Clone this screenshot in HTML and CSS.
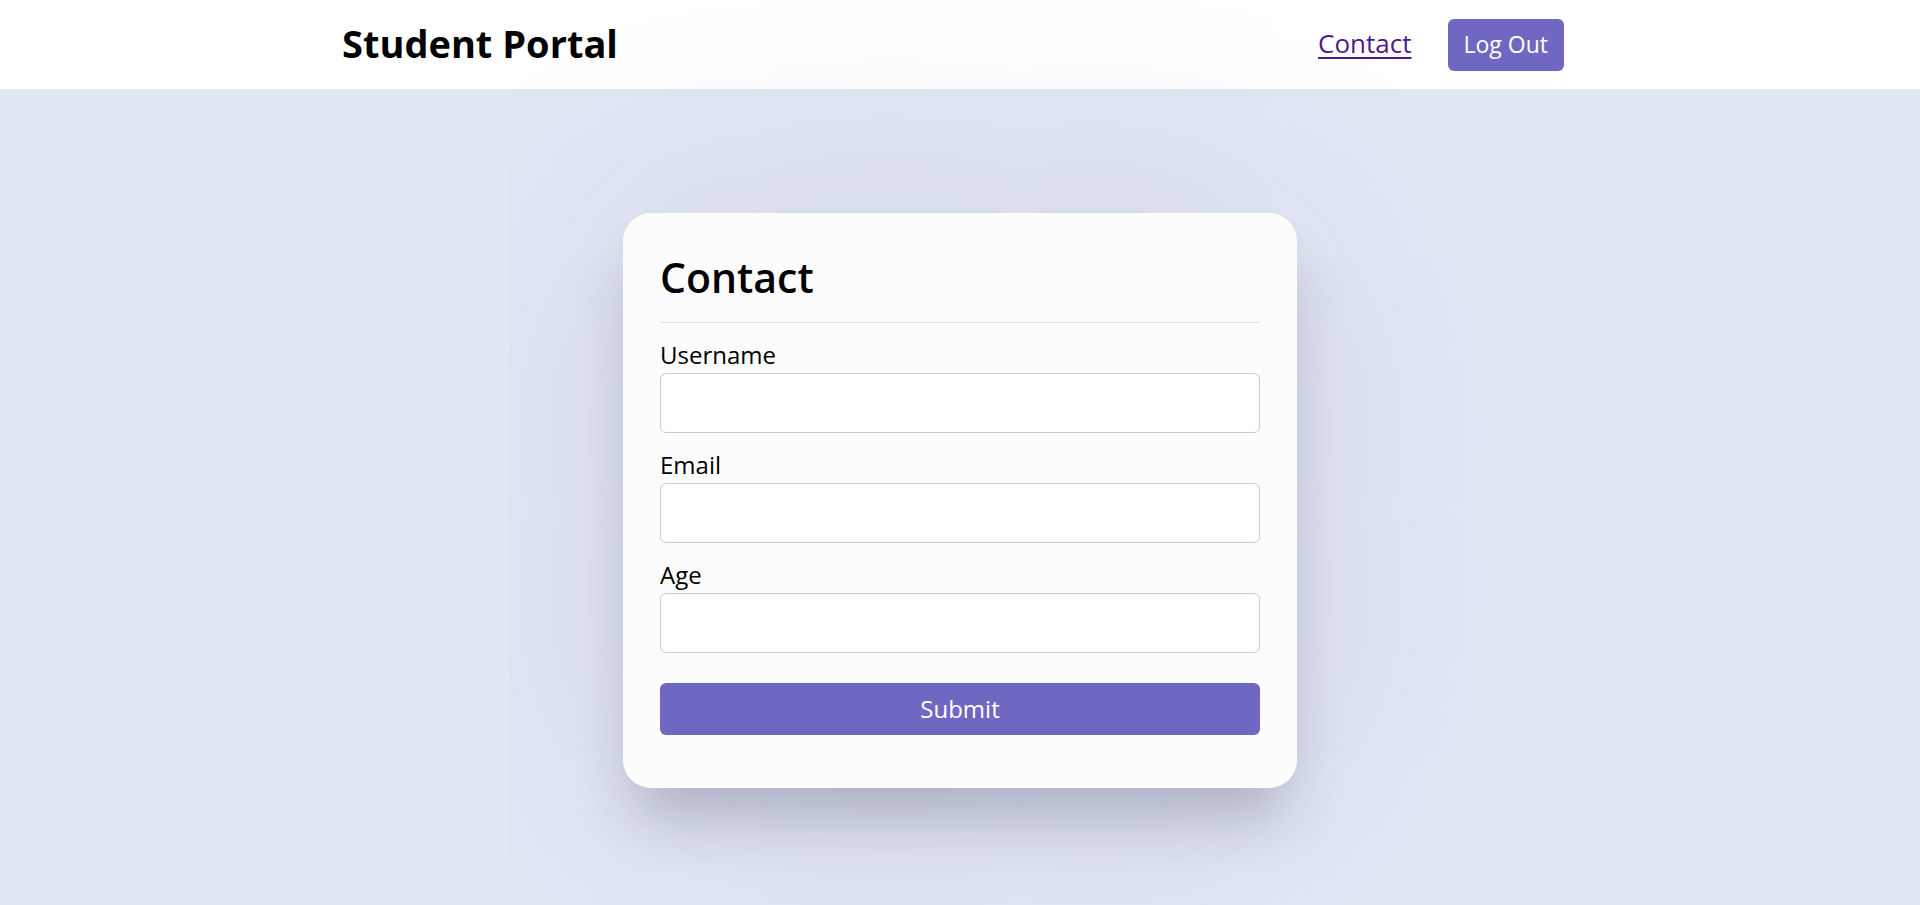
FILE: index.html
```html
<!DOCTYPE html>
<html lang="en">
<head>
<meta charset="utf-8">
<title>Student Portal</title>
<link rel="stylesheet" href="styles.css">
</head>
<body>
<header class="site-header">
  <div class="header-inner">
    <h1 class="brand">Student Portal</h1>
    <nav class="nav">
      <a class="nav-link" href="#">Contact</a>
      <button class="btn-logout" type="button">Log Out</button>
    </nav>
  </div>
</header>
<main class="main">
  <section class="card">
    <h2 class="card-title">Contact</h2>
    <form class="form">
      <label class="field-label" for="username">Username</label>
      <input class="field-input" id="username" type="text">
      <label class="field-label" for="email">Email</label>
      <input class="field-input" id="email" type="email">
      <label class="field-label" for="age">Age</label>
      <input class="field-input" id="age" type="number">
      <button class="btn-submit" type="submit">Submit</button>
    </form>
  </section>
</main>
</body>
</html>
```
FILE: styles.css
```css
* { box-sizing: border-box; }

html, body {
  margin: 0;
  padding: 0;
}

body {
  font-family: "Open Sans", "Liberation Sans", sans-serif;
  background: #e2e7f4;
  color: #000;
  min-height: 905px;
}

.site-header {
  background: #fff;
  height: 89px;
}

.header-inner {
  width: 1240px;
  margin: 0 auto;
  height: 100%;
  padding: 0 16px 0 2px;
  display: flex;
  align-items: center;
  justify-content: space-between;
}

.brand {
  margin: 0 0 4px;
  font-size: 38px;
  font-weight: 700;
  line-height: 1;
  letter-spacing: 0;
}

.nav {
  display: flex;
  align-items: center;
  gap: 36px;
}

.nav-link {
  margin-bottom: 4px;
  color: #4e1a8b;
  font-size: 26px;
  text-decoration: underline;
  text-decoration-thickness: 2px;
  text-underline-offset: 4px;
}

.btn-logout {
  font-family: inherit;
  font-size: 23px;
  color: #fff;
  background: #6f68c3;
  border: none;
  border-radius: 6px;
  height: 52px;
  padding: 0 16px 2px;
  cursor: pointer;
}

.main {
  min-height: calc(905px - 89px);
  display: flex;
  align-items: center;
  justify-content: center;
  padding-top: 6px;
}

.card {
  width: 674px;
  background: #fcfcfc;
  border-radius: 28px;
  padding: 37px;
  box-shadow: 0 40px 60px -14px rgba(20, 25, 60, 0.24), 0 10px 260px rgba(40, 50, 110, 0.14);
}

.card-title {
  margin: 0;
  font-size: 41px;
  font-weight: 600;
  line-height: 54px;
  padding-bottom: 18px;
  border-bottom: 1px solid #e5e5e5;
}

.form {
  display: flex;
  flex-direction: column;
  padding-top: 14px;
}

.field-label {
  font-size: 24px;
  line-height: 36px;
}

.field-input {
  height: 60px;
  width: 100%;
  border: 1px solid #cccccc;
  border-radius: 6px;
  background: #fff;
  margin: 0 0 14px;
  font-family: inherit;
  font-size: 20px;
  padding: 0 12px;
}

.btn-submit {
  margin: 16px 0 16px;
  height: 52px;
  width: 100%;
  border: none;
  border-radius: 6px;
  background: #6f68c3;
  color: #fff;
  font-family: inherit;
  font-size: 24px;
  cursor: pointer;
}
```
